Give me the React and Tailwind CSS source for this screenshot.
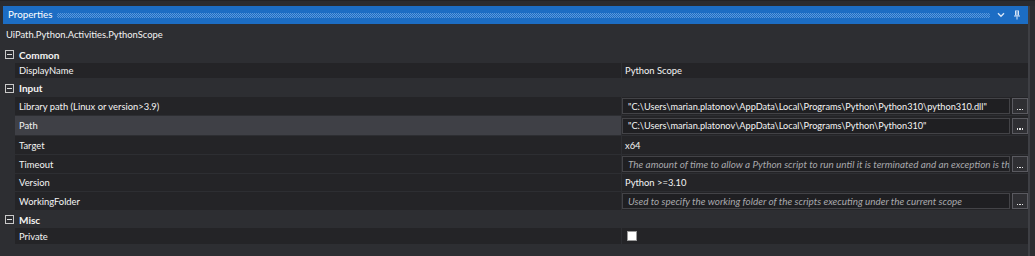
import React from "react";

const FONT = "font-['Lato','Noto_Sans',sans-serif]";

function CatIcon() {
  return (
    <div className="w-[9px] h-[9px] border border-[#c9c9c9] flex items-center justify-center shrink-0">
      <div className="w-[5px] h-[1px] bg-[#e0e0e0]" />
    </div>
  );
}

function Category({ name, h = "h-[17px]" }) {
  return (
    <div className={`${h} flex items-center pl-[2px] gap-[5px]`}>
      <CatIcon />
      <span className="text-[10px] font-bold text-[#f4f4f4] leading-none">{name}</span>
    </div>
  );
}

function Row({ label, highlight, h = "h-[17px]", children }) {
  return (
    <div className={`${h} flex ml-[12px] mb-[1px]`}>
      <div
        className={`w-[606px] flex items-center pl-[4px] pt-[2px] text-[9.4px] text-[#f4f4f4] ${
          highlight ? "bg-[#3f4046]" : "bg-[#242427]"
        }`}
      >
        {label}
      </div>
      <div className="w-[1px]" />
      <div className="flex-1 bg-[#242427] flex items-center text-[9.4px] text-[#f4f4f4] overflow-hidden">
        {children}
      </div>
    </div>
  );
}

function Box({ text, hint }) {
  return (
    <div className="flex items-center w-full">
      <div
        className={`w-[388px] h-[16px] border border-[#434347] bg-[#1f1f22] flex items-center px-[5px] pt-[1px] whitespace-nowrap overflow-hidden ${
          hint ? "italic text-[9.9px] text-[#a9a9ad]" : "text-[9.2px] text-[#f4f4f4]"
        }`}
      >
        {text}
      </div>
      <div className="ml-[2px] w-[16px] h-[16px] border border-[#5a5a60] bg-[#2f2f33] flex items-end justify-center pb-[3px]">
        <div className="flex gap-[1px]">
          <div className="w-[1.5px] h-[1.5px] bg-[#e6e6e6]" />
          <div className="w-[1.5px] h-[1.5px] bg-[#e6e6e6]" />
          <div className="w-[1.5px] h-[1.5px] bg-[#e6e6e6]" />
        </div>
      </div>
    </div>
  );
}

export default function App() {
  return (
    <div className={`w-[1035px] h-[256px] bg-[#2d2e32] overflow-hidden flex flex-col ${FONT}`}>
      <div className="h-[6px] bg-[#2b2c30] border-t border-[#232326]" />
      <div className="flex-1 flex pl-[3px] pr-[5px]">
        <div className="flex-1 flex flex-col border-r-2 border-[#3e3f44]">
          {/* title bar */}
          <div className="h-[18px] bg-[#1c6dc4] flex items-center pl-[5px] pr-[5px]">
            <span className="text-[9.8px] text-[#ffffff] leading-none">Properties</span>
            <div className="flex-1 mx-[5px] h-[5px] bg-[image:repeating-conic-gradient(#5a98dc_0_25%,transparent_0_50%)] bg-[length:2px_2px]" />
            <svg width="8" height="6" viewBox="0 0 8 6" className="ml-[2px]">
              <path d="M1 1.2 L4 4.2 L7 1.2" stroke="#d8e6f7" strokeWidth="1.4" fill="none" />
            </svg>
            <svg width="8" height="10" viewBox="0 0 8 10" className="ml-[8px] mr-[2px]">
              <rect x="2" y="0.5" width="4" height="5" fill="#d8e6f7" />
              <rect x="3.5" y="1" width="1" height="4" fill="#1c6dc4" />
              <rect x="1" y="5.5" width="6" height="1" fill="#d8e6f7" />
              <rect x="3.5" y="6.5" width="1" height="3" fill="#d8e6f7" />
            </svg>
          </div>
          {/* activity name */}
          <div className="h-[22px] flex items-center pl-[3px] text-[9.4px] text-[#f4f4f4]">
            UiPath.Python.Activities.PythonScope
          </div>
          <Category name="Common" />
          <Row label="DisplayName" h="h-[15px]">
            <span className="pl-[3px] pt-[2px]">Python Scope</span>
          </Row>
          <Category name="Input" h="h-[18px]" />
          <Row label="Library path (Linux or version>3.9)" h="h-[18px]">
            <Box text={'"C:\\Users\\marian.platonov\\AppData\\Local\\Programs\\Python\\Python310\\python310.dll"'} />
          </Row>
          <Row label="Path" highlight h="h-[19px]">
            <Box text={'"C:\\Users\\marian.platonov\\AppData\\Local\\Programs\\Python\\Python310"'} />
          </Row>
          <Row label="Target" h="h-[18px]">
            <span className="pl-[3px] pt-[2px]">x64</span>
          </Row>
          <Row label="Timeout" h="h-[18px]">
            <Box
              hint
              text="The amount of time to allow a Python script to run until it is terminated and an exception is thrown."
            />
          </Row>
          <Row label="Version">
            <span className="pl-[3px] pt-[2px]">Python &gt;=3.10</span>
          </Row>
          <Row label="WorkingFolder" h="h-[18px]">
            <Box hint text="Used to specify the working folder of the scripts executing under the current scope" />
          </Row>
          <Category name="Misc" />
          <Row label="Private" h="h-[16px]">
            <div className="ml-[5px] w-[10px] h-[10px] bg-white border border-[#9a9a9a]" />
          </Row>
        </div>
      </div>
    </div>
  );
}
